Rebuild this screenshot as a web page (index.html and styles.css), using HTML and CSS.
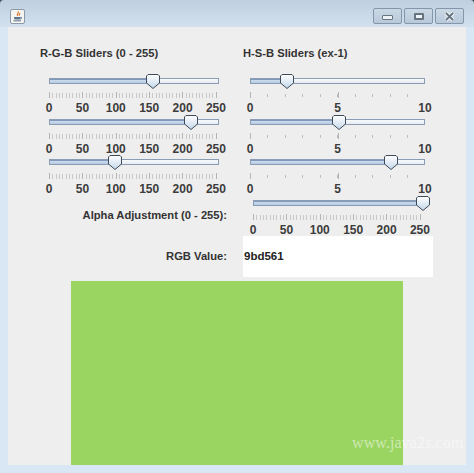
FILE: index.html
```html
<!DOCTYPE html>
<html lang="en">
<head>
  <meta charset="UTF-8" />
  <title>Color Sliders</title>
  <link rel="stylesheet" href="styles.css">
</head>
<body>
  <div class="window">
    <div class="titlebar">
      <div class="app-icon">
        <svg width="15" height="15" viewBox="0 0 15 15">
          <rect x="0.5" y="0.5" width="14" height="14" rx="1.5" fill="#f4f4f0" stroke="#8d99a8"/>
          <path d="M8 2.500c1.500 1.500-1.800 2.500-.5 4.300M9.800 4c.6 1-1.300 1.500-.5 2.800" fill="none" stroke="#e0762a" stroke-width="1.200"/>
          <path d="M4 8h6.500v1.200c0 1-1 1.300-1.500 1.300H5.500C4.800 10.500 4 10 4 9.200z" fill="#5f7690"/>
          <path d="M10.500 8.300c1.600-.3 1.800 1.300-.3 1.700" fill="none" stroke="#5f7690"/>
          <path d="M3.500 11.800h7.500" stroke="#5f7690"/>
        </svg>
      </div>
      <div class="win-buttons">
        <div class="win-btn"><span class="icon-min"></span></div>
        <div class="win-btn"><span class="icon-max"></span></div>
        <div class="win-btn">
          <svg width="13" height="11" viewBox="0 0 13 11">
            <path d="M3 2l7 7M10 2l-7 7" stroke="#eef3f8" stroke-width="4"/>
            <path d="M3 2l7 7M10 2l-7 7" stroke="#66747f" stroke-width="1.800"/>
          </svg>
        </div>
      </div>
    </div>

    <div class="content">
      <div class="controls">
        <div class="col-left">
          <h2 class="group-title">R-G-B Sliders (0 - 255)</h2>
          <div class="slider rgb">
            <div class="track"><div class="fill fill-r"></div><div class="thumb" style="left: 60.8%"><svg width="14" height="15" viewBox="0 0 14 15"><use href="#thumb"/></svg></div></div>
            <div class="ticks ticks-rgb"></div>
            <div class="tick-labels labels-rgb"><span>0</span><span>50</span><span>100</span><span>150</span><span>200</span><span>250</span></div>
          </div>
          <div class="slider rgb">
            <div class="track"><div class="fill fill-g"></div><div class="thumb" style="left: 83.5%"><svg width="14" height="15" viewBox="0 0 14 15"><use href="#thumb"/></svg></div></div>
            <div class="ticks ticks-rgb"></div>
            <div class="tick-labels labels-rgb"><span>0</span><span>50</span><span>100</span><span>150</span><span>200</span><span>250</span></div>
          </div>
          <div class="slider rgb">
            <div class="track"><div class="fill fill-b"></div><div class="thumb" style="left: 37.8%"><svg width="14" height="15" viewBox="0 0 14 15"><use href="#thumb"/></svg></div></div>
            <div class="ticks ticks-rgb"></div>
            <div class="tick-labels labels-rgb"><span>0</span><span>50</span><span>100</span><span>150</span><span>200</span><span>250</span></div>
          </div>
        </div>

        <div class="col-right">
          <h2 class="group-title">H-S-B Sliders (ex-1)</h2>
          <div class="slider hsb">
            <div class="track"><div class="fill fill-h"></div><div class="thumb" style="left: 20%"><svg width="14" height="15" viewBox="0 0 14 15"><use href="#thumb"/></svg></div></div>
            <div class="ticks ticks-hsb"></div>
            <div class="tick-labels"><span>0</span><span>5</span><span>10</span></div>
          </div>
          <div class="slider hsb">
            <div class="track"><div class="fill fill-s"></div><div class="thumb" style="left: 50%"><svg width="14" height="15" viewBox="0 0 14 15"><use href="#thumb"/></svg></div></div>
            <div class="ticks ticks-hsb"></div>
            <div class="tick-labels"><span>0</span><span>5</span><span>10</span></div>
          </div>
          <div class="slider hsb">
            <div class="track"><div class="fill fill-v"></div><div class="thumb" style="left: 80.5%"><svg width="14" height="15" viewBox="0 0 14 15"><use href="#thumb"/></svg></div></div>
            <div class="ticks ticks-hsb"></div>
            <div class="tick-labels"><span>0</span><span>5</span><span>10</span></div>
          </div>
        </div>

        <label class="row-label alpha-label">Alpha Adjustment (0 - 255):</label>
        <div class="slider rgb alpha">
          <div class="track"><div class="fill fill-a"></div><div class="thumb" style="left: 100%"><svg width="14" height="15" viewBox="0 0 14 15"><use href="#thumb"/></svg></div></div>
          <div class="ticks ticks-rgb"></div>
          <div class="tick-labels labels-rgb"><span>0</span><span>50</span><span>100</span><span>150</span><span>200</span><span>250</span></div>
        </div>

        <label class="row-label value-label">RGB Value:</label>
        <div class="rgb-value">9bd561</div>
      </div>

      <div class="swatch"></div>
      <div class="watermark">www.java2s.com</div>
    </div>
  </div>

  <!-- shared slider thumb -->
  <svg class="defs" width="0" height="0">
    <defs>
      <linearGradient id="thumb-fill" x1="0" y1="0" x2="0" y2="1">
        <stop offset="0" stop-color="#ffffff"/>
        <stop offset="1" stop-color="#c3d7ea"/>
      </linearGradient>
      <path id="thumb" d="M2 .5h10l1.500 1.500v7L7 14.500.5 9V2z" fill="url(#thumb-fill)" stroke="#3f4a58"/>
    </defs>
  </svg>
</body>
</html>
```

FILE: styles.css
```css
* {
  box-sizing: border-box;
}

html {
  background-color: #4a4f55;
}

body {
  margin: 0;
  font-family: "Liberation Sans", Arial, sans-serif;
}

.defs {
  position: absolute;
}

.window {
  width: 474px;
  height: 473px;
  padding: 0 8px 8px;
  border-radius: 4px 4px 0 0;
  background: linear-gradient(to bottom, #bfcfdf 0, #d3e1ee 27px, #d9e7f4 27px);
}

.titlebar {
  display: flex;
  justify-content: space-between;
  height: 27px;
  padding: 8px 2px 0;
}

.app-icon {
  height: 15px;
  margin-top: 1px;
}

.win-buttons {
  display: flex;
  gap: 2px;
}

.win-btn {
  display: flex;
  align-items: center;
  justify-content: center;
  width: 29px;
  height: 16px;
  border: 1px solid #8496aa;
  border-radius: 2px;
  background: linear-gradient(to bottom, #cbd8e5, #b8c9da);
}

.icon-min {
  width: 11px;
  height: 5px;
  margin-top: 3px;
  border: 1px solid #66747f;
  border-radius: 1px;
  background-color: #eef3f8;
}

.icon-max {
  width: 10px;
  height: 7px;
  border: 2px solid #66747f;
  border-radius: 1px;
  background-color: #eef3f8;
}

.content {
  position: relative;
  height: 438px;
  padding-top: 18px;
  background-color: #eeeeee;
  overflow: hidden;
}

.controls {
  display: grid;
  grid-template-columns: 235px 223px;
}

.group-title {
  margin: 0 0 12px;
  font-size: 11.2px;
  line-height: 16px;
  font-weight: bold;
  color: #333333;
}

.col-left .group-title {
  padding-left: 32px;
}

.col-left .slider {
  margin-left: 41px;
}

.col-right .slider {
  margin-left: 7px;
}

.slider {
  height: 40.5px;
  padding-top: 5px;
}

.slider.rgb {
  width: 170px;
}

.slider.hsb {
  width: 175px;
}

.slider.alpha {
  height: 41px;
  margin-left: 10px;
}

.track {
  position: relative;
  height: 6px;
  border: 1px solid #8a9db5;
  background: linear-gradient(to bottom, #f8fafc, #e6ebf1);
}

.fill {
  height: 100%;
  border-top: 1px solid #7f99bb;
  background: linear-gradient(to bottom, #cfdded, #b4c9e0);
}

.fill-r { width: 60.8%; }
.fill-g { width: 83.5%; }
.fill-b { width: 38%; }
.fill-h { width: 20%; }
.fill-s { width: 50%; }
.fill-v { width: 80%; }
.fill-a { width: 100%; }

.thumb {
  position: absolute;
  top: -5px;
  height: 15px;
  margin-left: 1px;
  transform: translateX(-50%);
}

.ticks {
  height: 6px;
  margin-top: 8px;
}

.ticks-rgb {
  background:
    repeating-linear-gradient(to right, #b4b4b4 0, #b4b4b4 1px, transparent 1px, transparent 33.33px) 0 0 / 100% 6px no-repeat,
    repeating-linear-gradient(to right, #c8c8c8 0, #c8c8c8 1px, transparent 1px, transparent 3.333px) 0 1px / 100% 5px no-repeat;
}

.ticks-hsb {
  background:
    repeating-linear-gradient(to right, #b4b4b4 0, #b4b4b4 1px, transparent 1px, transparent 87.5px) 0 0 / 100% 6px no-repeat,
    repeating-linear-gradient(to right, #bcbcbc 0, #bcbcbc 1px, transparent 1px, transparent 17.5px) 0 2px / 100% 3px no-repeat;
}

.tick-labels {
  display: flex;
  justify-content: space-between;
  margin-top: 3px;
  font-size: 12px;
  line-height: 14px;
  font-weight: bold;
  color: #3c3c3c;
}

.labels-rgb {
  width: 167px;
}

/* zero width so each label sits centred on its tick */
.tick-labels span {
  display: flex;
  justify-content: center;
  width: 0;
}

.row-label {
  display: flex;
  align-items: center;
  justify-content: flex-end;
  padding-right: 16px;
  font-size: 11.2px;
  font-weight: bold;
  color: #333333;
}

.alpha-label {
  align-items: flex-start;
  padding-top: 14px;
}

.rgb-value {
  display: flex;
  align-items: center;
  width: 190px;
  height: 41px;
  padding-left: 1px;
  background-color: #ffffff;
  font-size: 11.5px;
  font-weight: bold;
  color: #222222;
}

.swatch {
  width: 332px;
  height: 184px;
  margin: 4px 0 0 63px;
  background-color: #9bd561;
}

.watermark {
  position: absolute;
  left: 344px;
  top: 407px;
  font-family: "Liberation Serif", serif;
  font-size: 16px;
  line-height: 18px;
  letter-spacing: 0.1px;
  white-space: nowrap;
  color: rgba(255, 255, 255, 0.5);
}
```
